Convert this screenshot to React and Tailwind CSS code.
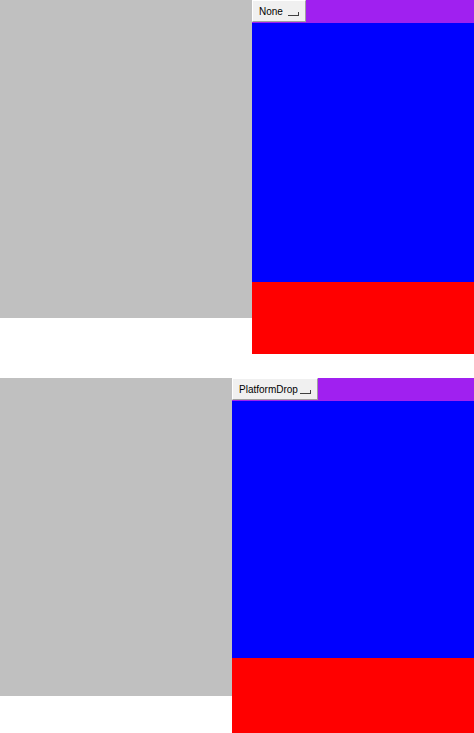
import React from "react";

function DropButton({ label, width }) {
    return (
        <div
            className="flex h-[22px] items-center justify-between border border-t-white border-l-white border-r-[#a0a0a0] border-b-[#a0a0a0] bg-[#f0f0f0] pl-[6px] pr-[6px] pt-[2px] text-[10px] text-black"
            style={{ width }}
        >
            <span className="leading-none">{label}</span>
            <span className="mt-[3px] block h-[4px] w-[11px] border-b border-r border-[#404040]" />
        </div>
    );
}

function Demo({ label, leftWidth, buttonWidth, blueHeight, redHeight }) {
    return (
        <div className="flex items-start">
            <div className="h-[318px] shrink-0 bg-[#c0c0c0]" style={{ width: leftWidth }} />
            <div className="flex flex-1 flex-col">
                <div className="h-[23px] bg-[#a020f0]">
                    <DropButton label={label} width={buttonWidth} />
                </div>
                <div className="bg-[#0000ff]" style={{ height: blueHeight }} />
                <div className="bg-[#ff0000]" style={{ height: redHeight }} />
            </div>
        </div>
    );
}

export default function App() {
    return (
        <div className="flex w-[474px] flex-col gap-[24px] bg-white font-['Liberation_Sans',Arial,sans-serif]">
            <Demo label="None" leftWidth={252} buttonWidth={54} blueHeight={259} redHeight={72} />
            <Demo label="PlatformDrop" leftWidth={232} buttonWidth={86} blueHeight={257} redHeight={76} />
        </div>
    );
}
